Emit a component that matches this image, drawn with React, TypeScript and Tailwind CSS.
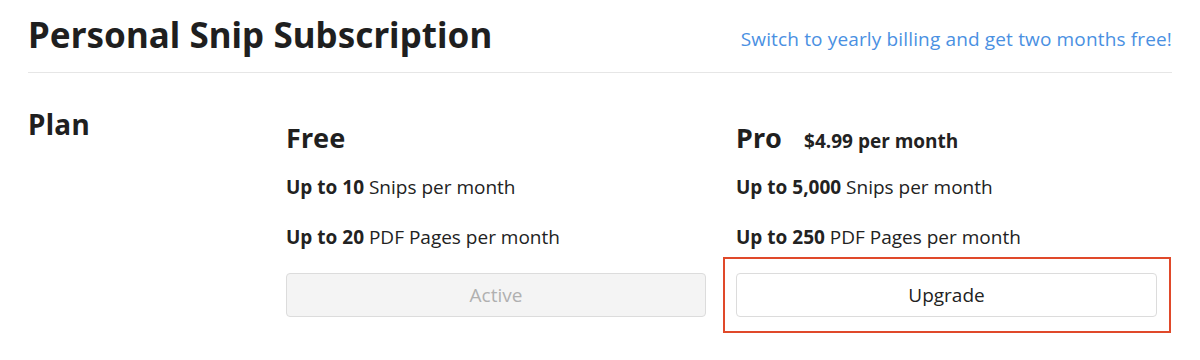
import React from 'react';

const heading = { fontFamily: '"Noto Sans", Inter, sans-serif' };

const plans = [
  {
    name: 'Free',
    price: '',
    snips: 'Up to 10',
    pages: 'Up to 20',
    action: 'Active',
    active: true,
  },
  {
    name: 'Pro',
    price: '$4.99 per month',
    snips: 'Up to 5,000',
    pages: 'Up to 250',
    action: 'Upgrade',
    active: false,
  },
];

export default function App() {
  return (
    <div
      className="w-[1200px] h-[360px] bg-white text-[#222] px-[28px] overflow-hidden"
      style={{ fontFamily: '"Open Sans", "Noto Sans", sans-serif' }}
    >
      <div className="flex items-end justify-between border-b border-[#e6e6e6] pt-[13px] pb-[15px]">
        <h1 className="text-[35px] leading-[44px] font-bold tracking-[0.05px] text-[#1f1f1f]" style={heading}>
          Personal Snip Subscription
        </h1>
        <a className="text-[19px] leading-[24px] tracking-[0.15px] text-[#4a90e2] mb-[6px]">
          Switch to yearly billing and get two months free!
        </a>
      </div>

      <div className="flex pt-[34px]">
        <div className="w-[258px] shrink-0">
          <h2 className="text-[28px] leading-[34px] font-bold tracking-[0.3px] text-[#1f1f1f]" style={heading}>
            Plan
          </h2>
        </div>
        <div className="grid grid-cols-[420px_421px] gap-x-[30px] pt-[14px]">
          {plans.map((p) => (
            <div key={p.name} className="flex flex-col">
              <div className="flex items-baseline gap-[22px] h-[36px]">
                <h3 className="text-[27px] leading-[34px] font-bold tracking-[0.3px] text-[#1f1f1f]" style={heading}>
                  {p.name}
                </h3>
                {p.price && <span className="text-[19px] font-bold text-[#222]">{p.price}</span>}
              </div>
              <p className="text-[19px] leading-[24px] mt-[18px] text-[#222]">
                <b className="font-bold">{p.snips}</b> Snips per month
              </p>
              <p className="text-[19px] leading-[24px] mt-[26px] text-[#222]">
                <b className="font-bold">{p.pages}</b> PDF Pages per month
              </p>
              <div className="relative mt-[24px]">
                {p.active ? (
                  <button className="w-full h-[44px] rounded-[4px] border border-[#dcdcdc] bg-[#f4f4f4] text-[19px] text-[#b0b0b0]">
                    {p.action}
                  </button>
                ) : (
                  <>
                    <div className="absolute -left-[13px] -right-[14px] -top-[16px] -bottom-[16px] border-2 border-[#e0492a]" />
                    <button className="w-full h-[44px] rounded-[4px] border border-[#dcdcdc] bg-white text-[19px] text-[#222]">
                      {p.action}
                    </button>
                  </>
                )}
              </div>
            </div>
          ))}
        </div>
      </div>
    </div>
  );
}
